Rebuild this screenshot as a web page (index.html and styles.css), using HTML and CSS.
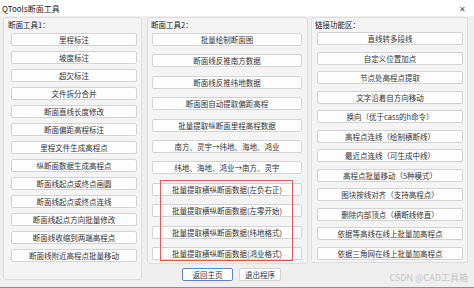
FILE: index.html
```
<!DOCTYPE html>
<html lang="zh-CN">
<head>
  <meta charset="UTF-8">
  <title>QTools断面工具</title>
  <link rel="stylesheet" href="styles.css">
</head>
<body>
  <div class="window">
    <div class="titlebar">
      <span class="title">QTools断面工具</span>
      <span class="close">✕</span>
    </div>

    <div class="panels">
      <div class="group group-1">
        <div class="group-label">断面工具1：</div>
        <div class="btn-list">
          <div class="btn">里程标注</div>
          <div class="btn">坡度标注</div>
          <div class="btn">超欠标注</div>
          <div class="btn">文件拆分合并</div>
          <div class="btn">断面直线长度修改</div>
          <div class="btn">断面偏距高程标注</div>
          <div class="btn">里程文件生成高程点</div>
          <div class="btn">纵断面数据生成高程点</div>
          <div class="btn">断面线起点或终点画圆</div>
          <div class="btn">断面线起点或终点连线</div>
          <div class="btn">断面线起点方向批量修改</div>
          <div class="btn">断面线收缩到两端高程点</div>
          <div class="btn">断面线附近高程点批量移动</div>
        </div>
      </div>

      <div class="middle">
        <div class="group group-2">
          <div class="group-label">断面工具2：</div>
          <div class="btn-list">
            <div class="btn">批量绘制断面图</div>
            <div class="btn">断面线反推南方数据</div>
            <div class="btn">断面线反推纬地数据</div>
            <div class="btn">断面图自动提取偏距高程</div>
            <div class="btn">批量提取纵断面里程高程数据</div>
            <div class="btn">南方、灵宇→纬地、海地、鸿业</div>
            <div class="btn">纬地、海地、鸿业→南方、灵宇</div>
            <div class="btn">批量提取横纵断面数据(左负右正)</div>
            <div class="btn">批量提取横纵断面数据(左零开始)</div>
            <div class="btn">批量提取横纵断面数据(纬地格式)</div>
            <div class="btn">批量提取横纵断面数据(鸿业格式)</div>
          </div>
          <div class="mark"></div>
        </div>
        <div class="actions">
          <div class="btn btn-default">返回主页</div>
          <div class="btn btn-exit">退出程序</div>
        </div>
      </div>

      <div class="group group-3">
        <div class="group-label">链接功能区：</div>
        <div class="btn-list">
          <div class="btn">直线转多段线</div>
          <div class="btn">自定义位置加点</div>
          <div class="btn">节点处高程点提取</div>
          <div class="btn">文字沿着自方向移动</div>
          <div class="btn">换向（优于cass的h命令）</div>
          <div class="btn">高程点连线（绘制横断线）</div>
          <div class="btn">最近点连线（可生成中线）</div>
          <div class="btn">高程点批量移动（5种模式）</div>
          <div class="btn">图块按线对齐（支持高程点）</div>
          <div class="btn">删除内部顶点（横断线修直）</div>
          <div class="btn">依据等高线在线上批量加高程点</div>
          <div class="btn">依据三角网在线上批量加高程点</div>
        </div>
      </div>
    </div>

    <div class="watermark">CSDN @CAD工具箱</div>
  </div>
</body>
</html>
```

FILE: styles.css
```
body {
  margin: 0;
  padding: 0;
  font-family: "Noto Sans CJK SC", "Noto Sans", sans-serif;
  color: #333333;
  background-color: #efefef;
}

.window {
  position: relative;
  width: 474px;
  height: 288px;
  box-sizing: border-box;
  background-color: #efefef;
  border-bottom: 1px solid #8c8c8c;
  display: flex;
  flex-direction: column;
}

.titlebar {
  height: 16px;
  background-color: #ffffff;
  display: flex;
  align-items: center;
  justify-content: space-between;
  padding: 0 8px 0 2px;
  font-size: 8px;
  color: #222222;
}

.close {
  font-size: 8px;
  color: #555555;
}

.panels {
  display: flex;
  align-items: flex-start;
  padding: 1px 0 0 3px;
}

.group {
  position: relative;
  box-sizing: border-box;
  background-color: #f4f4f4;
  border: 1px solid #dddddd;
  border-radius: 3px;
}

.group-label {
  font-size: 7.5px;
  line-height: 10px;
  height: 10px;
  margin-top: 2px;
  color: #222222;
}

.btn-list {
  display: flex;
  flex-direction: column;
}

.btn {
  box-sizing: border-box;
  height: 13px;
  line-height: 11px;
  background-color: #fdfdfd;
  border: 1px solid #d3d3d3;
  border-radius: 2px;
  text-align: center;
  font-size: 7.5px;
  white-space: nowrap;
  color: #333333;
}

/* 断面工具1 */
.group-1 {
  width: 139px;
  height: 263px;
}

.group-1 .group-label {
  padding-left: 4px;
}

.group-1 .btn-list {
  margin-top: 3px;
  padding: 0 4px 0 7px;
  gap: 5px;
}

/* 断面工具2 */
.middle {
  width: 161px;
  margin-left: 5px;
  display: flex;
  flex-direction: column;
}

.group-2 {
  height: 247px;
}

.group-2 .group-label {
  padding-left: 3px;
}

.group-2 .btn-list {
  margin-top: 3px;
  padding: 0 5px 0 4px;
  gap: 8.4px;
}

.mark {
  position: absolute;
  left: 12px;
  top: 162px;
  width: 133px;
  height: 81px;
  box-sizing: border-box;
  border: 1px solid #e0585a;
}

.actions {
  display: flex;
  margin-top: 4px;
  padding-left: 35px;
  gap: 6px;
}

.actions .btn {
  height: 13px;
  border-radius: 2px;
}

.btn-default {
  width: 51px;
  border-color: #5a86c4;
}

.btn-exit {
  width: 42px;
}

/* 链接功能区 */
.group-3 {
  width: 157px;
  height: 246px;
  margin-left: 3px;
}

.group-3 .group-label {
  padding-left: 3px;
}

.group-3 .btn-list {
  margin-top: 2px;
  padding: 0 4px 0 5px;
  gap: 6.5px;
}

.watermark {
  position: absolute;
  right: 6px;
  bottom: 4px;
  font-size: 9px;
  line-height: 10px;
  color: #c6c6c6;
}
```
